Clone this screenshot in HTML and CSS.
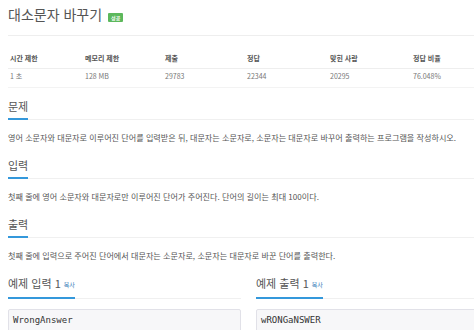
FILE: index.html
```html
<!DOCTYPE html>
<html lang="ko">
<head>
    <meta charset="UTF-8">
    <title>대소문자 바꾸기</title>
    <link rel="stylesheet" href="styles.css">
</head>
<body>
    <div class="page">
        <div class="page-header">
            <h1>대소문자 바꾸기</h1>
            <span class="badge">성공</span>
        </div>

        <table class="info-table">
            <thead>
                <tr>
                    <th>시간 제한</th>
                    <th>메모리 제한</th>
                    <th>제출</th>
                    <th>정답</th>
                    <th>맞힌 사람</th>
                    <th>정답 비율</th>
                </tr>
            </thead>
            <tbody>
                <tr>
                    <td>1 초</td>
                    <td>128 MB</td>
                    <td>29783</td>
                    <td>22344</td>
                    <td>20295</td>
                    <td>76.048%</td>
                </tr>
            </tbody>
        </table>

        <section class="section">
            <div class="headline"><h2>문제</h2></div>
            <p>영어 소문자와 대문자로 이루어진 단어를 입력받은 뒤, 대문자는 소문자로, 소문자는 대문자로 바꾸어 출력하는 프로그램을 작성하시오.</p>
        </section>

        <section class="section">
            <div class="headline"><h2>입력</h2></div>
            <p>첫째 줄에 영어 소문자와 대문자로만 이루어진 단어가 주어진다. 단어의 길이는 최대 100이다.</p>
        </section>

        <section class="section">
            <div class="headline"><h2>출력</h2></div>
            <p>첫째 줄에 입력으로 주어진 단어에서 대문자는 소문자로, 소문자는 대문자로 바꾼 단어를 출력한다.</p>
        </section>

        <div class="samples">
            <section class="section">
                <div class="headline"><h2>예제 입력 1 <a class="copy">복사</a></h2></div>
                <pre class="sample-data">WrongAnswer</pre>
            </section>
            <section class="section">
                <div class="headline"><h2>예제 출력 1 <a class="copy">복사</a></h2></div>
                <pre class="sample-data">wRONGaNSWER</pre>
            </section>
        </div>
    </div>
</body>
</html>
```

FILE: styles.css
```css
/* Base */
* {
    margin: 0;
    padding: 0;
    box-sizing: border-box;
}
html, body {
    overflow: hidden;
}
body {
    font-family: "Noto Sans CJK KR", "Noto Sans", sans-serif;
    color: #555;
    background: #fff;
    padding: 0 8px;
}
.page {
    width: 481px;
}
/* Title */
.page-header {
    display: flex;
    align-items: center;
    gap: 6px;
    padding: 4px 0 11px;
    border-bottom: 1px solid #eee;
}
.page-header h1 {
    font-size: 14px;
    font-weight: 400;
    color: #555;
    line-height: 20px;
}
.badge {
    margin-top: 6px;
    background: #5cb85c;
    color: #fff;
    font-size: 5px;
    font-weight: 700;
    line-height: 9px;
    padding: 0 3px;
    border-radius: 1px;
}
/* Info table */
.info-table {
    width: 100%;
    margin-top: 17px;
    border-collapse: collapse;
    table-layout: fixed;
    font-size: 7px;
    line-height: 10px;
}
.info-table th:nth-child(1) { width: 75px; }
.info-table th:nth-child(2) { width: 80px; }
.info-table th:nth-child(3) { width: 82px; }
.info-table th:nth-child(4) { width: 83px; }
.info-table th:nth-child(5) { width: 83px; }
.info-table th {
    text-align: left;
    font-weight: 700;
    color: #555;
    padding: 0 2px 5px;
    border-bottom: 1px solid #eee;
}
.info-table td {
    color: #777;
    padding: 2px 2px 6px;
    border-bottom: 1px solid #f3f3f3;
}
/* Sections */
.section {
    margin-top: 13px;
}
.info-table + .section {
    margin-top: 10px;
}
.headline {
    display: flex;
    border-bottom: 1px solid #f0f0f0;
}
.headline h2 {
    font-size: 11px;
    font-weight: 400;
    color: #555;
    line-height: 16px;
    padding-bottom: 4px;
    border-bottom: 2px solid #3498db;
    margin-bottom: -1px;
}
.section p {
    margin-top: 12px;
    font-size: 8.1px;
    line-height: 12px;
    color: #555;
}
.copy {
    font-size: 6px;
    color: #337ab7;
    vertical-align: 1px;
}
/* Samples */
.samples {
    display: grid;
    grid-template-columns: 1fr 1fr;
    gap: 15px;
}
.sample-data {
    margin-top: 10px;
    font-family: "DejaVu Sans Mono", "Liberation Mono", monospace;
    font-size: 9px;
    line-height: 11px;
    color: #333;
    background: #f7f7f9;
    border: 1px solid #e1e1e8;
    border-radius: 2px;
    padding: 5px 4px 10px;
}
```
